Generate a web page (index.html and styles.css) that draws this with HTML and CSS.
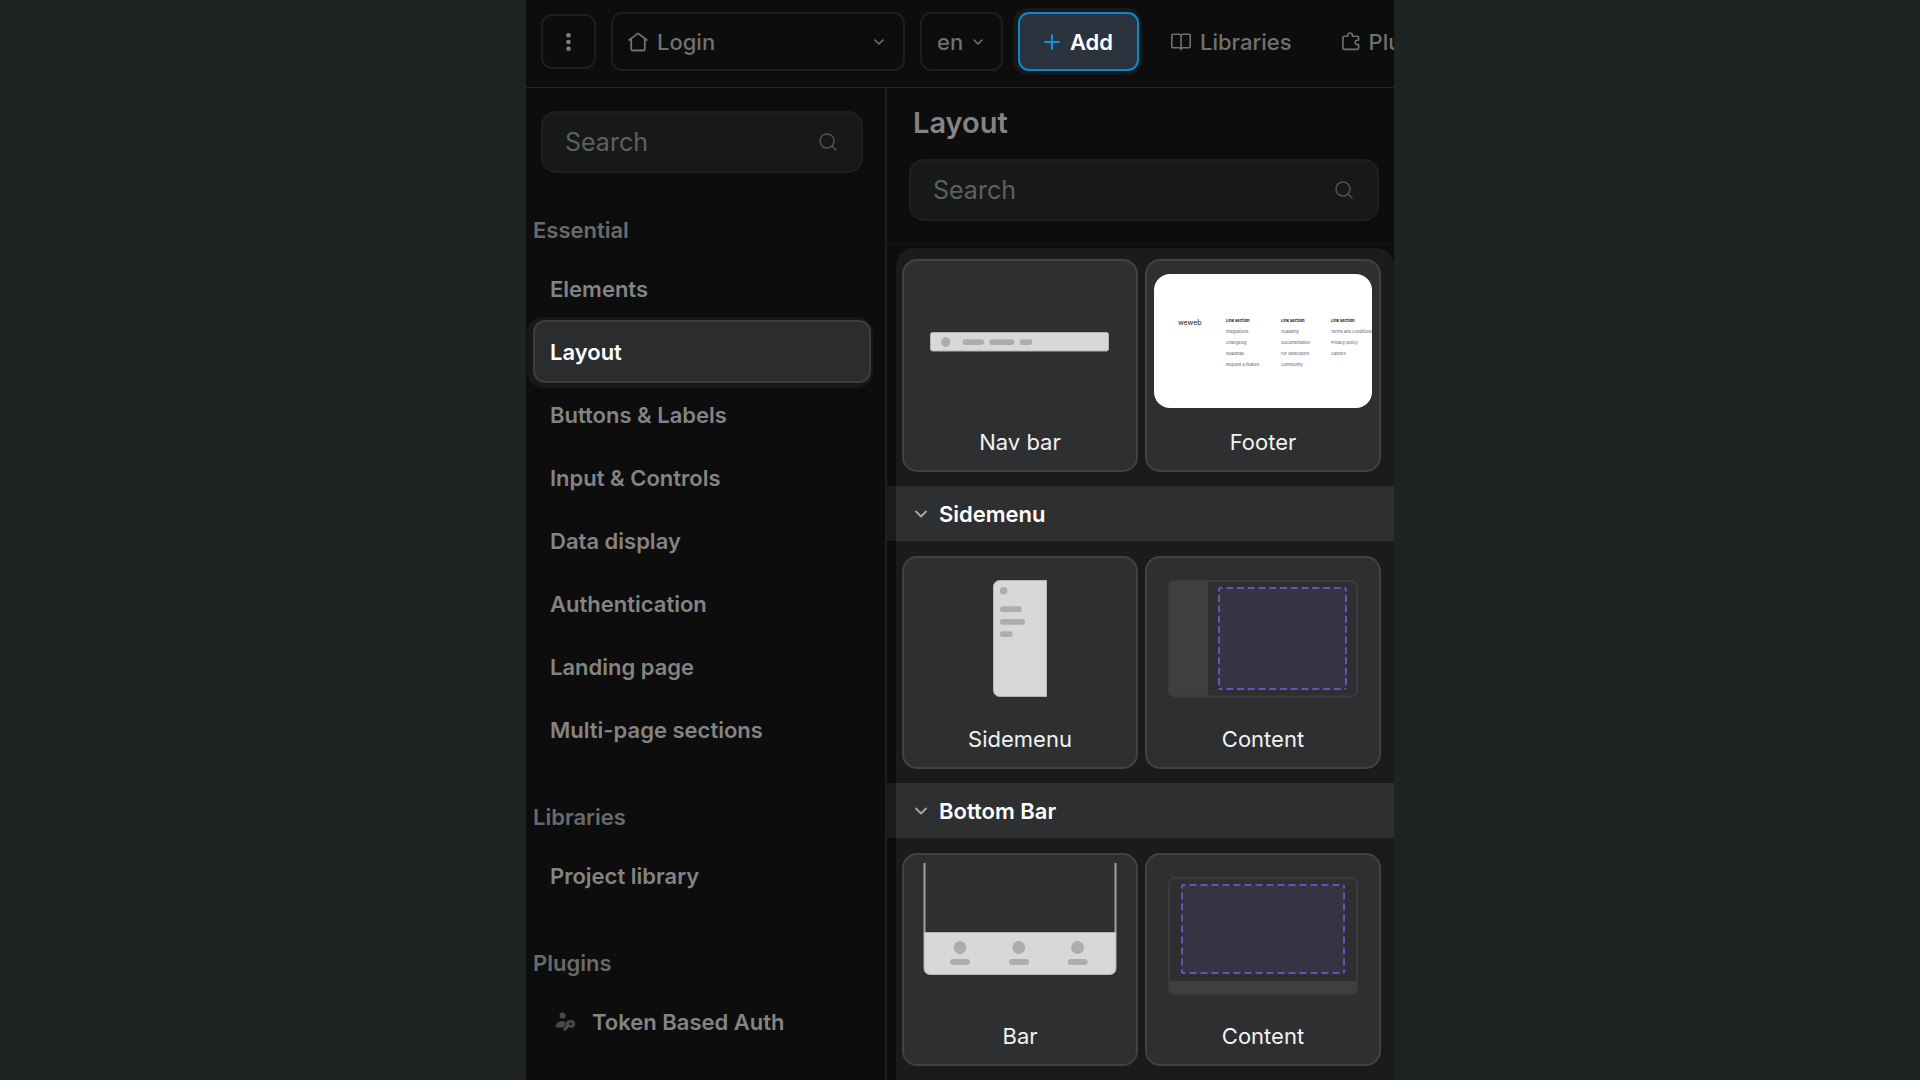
FILE: index.html
```html
<!DOCTYPE html>
<html lang="en">
    <head>
      <meta charset="utf-8">
      <title>Add - Layout</title>
      <link rel="stylesheet" href="styles.css">
    </head>

    <body>
        <div class="editor">
            <header class="topbar">
                <button class="menu_btn" type="button" aria-label="Menu">
                    <svg width="6" height="20" viewBox="0 0 6 20" fill="currentColor"><circle cx="2.500" cy="3.300" r="2.300"/><circle cx="2.500" cy="10" r="2.300"/><circle cx="2.500" cy="16.700" r="2.300"/></svg>
                </button>
                <label class="select_wrap page_select">
                    <svg width="20" height="20" viewBox="0 0 20 20" fill="none" stroke="currentColor" stroke-width="1.800" stroke-linecap="round" stroke-linejoin="round"><path d="M1.200 8 10 1.400l8.800 6.600M3.200 7v9.800a1.700 1.700 0 0 0 1.700 1.700h10.200a1.700 1.700 0 0 0 1.700-1.700V7"/></svg>
                    <select aria-label="Page"><option>Login</option></select>
                    <svg width="10" height="6" viewBox="0 0 10 6" fill="none" stroke="currentColor" stroke-width="1.600" stroke-linecap="round" stroke-linejoin="round"><path d="m1 1 4 4 4-4"/></svg>
                </label>
                <label class="select_wrap lang_select">
                    <select aria-label="Language"><option>en</option></select>
                    <svg width="10" height="6" viewBox="0 0 10 6" fill="none" stroke="currentColor" stroke-width="1.600" stroke-linecap="round" stroke-linejoin="round"><path d="m1 1 4 4 4-4"/></svg>
                </label>
                <button class="add_btn" type="button">
                    <svg width="16" height="16" viewBox="0 0 16 16" fill="none" stroke="currentColor" stroke-width="2" stroke-linecap="round"><path d="M8 1v14M1 8h14"/></svg>
                    <span>Add</span>
                </button>
                <a class="top_link" href="#libraries">
                    <svg width="20" height="18" viewBox="0 0 20 18" fill="none" stroke="currentColor" stroke-width="1.600" stroke-linejoin="round"><path d="M10 3.400C10 2 9 1.200 7.600 1.200H2A1.200 1.200 0 0 0 .8 2.400v11.200a1.200 1.200 0 0 0 1.200 1.200h6c1.200 0 2 .8 2 2M10 3.400c0-1.400 1-2.200 2.400-2.200H18a1.200 1.200 0 0 1 1.200 1.200v11.200a1.200 1.200 0 0 1-1.200 1.200h-6c-1.200 0-2 .8-2 2V3.400"/></svg>
                    Libraries
                </a>
                <a class="top_link" href="#plugins">
                    <svg width="18" height="20" viewBox="0 0 18 20" fill="none" stroke="currentColor" stroke-width="1.600" stroke-linejoin="round"><path d="M2.400 4.200h3.400V3.300a2.300 2.300 0 0 1 4.600 0v.9h4.700a1.500 1.500 0 0 1 1.500 1.500v2.500h-1.300a2.200 2.200 0 0 0 0 4.400h1.300v3.300a1.500 1.500 0 0 1-1.500 1.500H2.400a1.500 1.500 0 0 1-1.500-1.500V5.700a1.500 1.500 0 0 1 1.500-1.500z"/></svg>
                    Plugins
                </a>
            </header>

            <div class="workspace">
                <aside class="sidebar">
                    <label class="search">
                        <input type="text" placeholder="Search" aria-label="Search categories">
                        <svg width="18" height="18" viewBox="0 0 18 18" fill="none" stroke="currentColor" stroke-width="1.500" stroke-linecap="round"><circle cx="8" cy="8" r="7"/><path d="m13 13 4 4"/></svg>
                    </label>

                    <h3 class="group_title">Essential</h3>
                    <nav class="group">
                        <a class="item" href="#elements">Elements</a>
                        <a class="item active" href="#layout">Layout</a>
                        <a class="item" href="#buttons">Buttons &amp; Labels</a>
                        <a class="item" href="#input">Input &amp; Controls</a>
                        <a class="item" href="#data">Data display</a>
                        <a class="item" href="#auth">Authentication</a>
                        <a class="item" href="#landing">Landing page</a>
                        <a class="item" href="#multi">Multi-page sections</a>
                    </nav>

                    <h3 class="group_title">Libraries</h3>
                    <nav class="group">
                        <a class="item" href="#project">Project library</a>
                    </nav>

                    <h3 class="group_title">Plugins</h3>
                    <nav class="group">
                        <a class="item plugin" href="#token">
                            <svg width="20" height="20" viewBox="0 0 20 20" fill="currentColor"><circle cx="7.600" cy="3.600" r="3"/><path d="M.6 15.600c0-4 2.400-6.400 6.600-6.400 1.300 0 2.300.3 3 .8-.4 1.500-.3 2.300 0 3.300l-2.100 2.300z"/><path d="M14.600 8.200a4.300 4.300 0 0 0-4 5.600l-2.100 2.100v2.900h2.900v-1.700H13v-1.500h1.600a4 4 0 1 0 0-7.400zm1.300 2.500a1.200 1.200 0 1 1 0 2.400 1.200 1.200 0 0 1 0-2.400z" fill-rule="evenodd"/></svg>
                            Token Based Auth
                        </a>
                    </nav>
                </aside>

                <main class="panel">
                    <div class="panel_head">
                        <h2>Layout</h2>
                        <label class="search">
                            <input type="text" placeholder="Search" aria-label="Search layout">
                            <svg width="18" height="18" viewBox="0 0 18 18" fill="none" stroke="currentColor" stroke-width="1.500" stroke-linecap="round"><circle cx="8" cy="8" r="7"/><path d="m13 13 4 4"/></svg>
                        </label>
                    </div>

                    <div class="catalog">
                        <div class="cards">
                            <button class="card" type="button">
                                <span class="preview">
                                    <svg width="218" height="134" viewBox="0 0 218 134">
                                        <rect class="block" x="19.500" y="58.500" width="178" height="18.500" rx="2"/>
                                        <g class="mark"><ellipse cx="34.700" cy="68" rx="4.600" ry="5"/><rect x="51.600" y="65.300" width="21.600" height="5.600" rx="2.800"/><rect x="78.300" y="65.300" width="25" height="5.600" rx="2.800"/><rect x="108.700" y="65.300" width="12.700" height="5.600" rx="2.800"/></g>
                                    </svg>
                                </span>
                                <span class="card_name">Nav bar</span>
                            </button>
                            <button class="card" type="button">
                                <span class="preview footer_preview">
                                    <span class="footer_logo">weweb</span>
                                    <span class="footer_col"><b>Link section</b><span>Integrations</span><span>Changelog</span><span>Roadmap</span><span>Request a feature</span></span>
                                    <span class="footer_col"><b>Link section</b><span>Academy</span><span>Documentation</span><span>For developers</span><span>Community</span></span>
                                    <span class="footer_col"><b>Link section</b><span>Terms and conditions</span><span>Privacy policy</span><span>Careers</span></span>
                                </span>
                                <span class="card_name">Footer</span>
                            </button>
                        </div>

                        <button class="section_title" type="button">
                            <svg width="12" height="8" viewBox="0 0 12 8" fill="none" stroke="currentColor" stroke-width="1.800" stroke-linecap="round" stroke-linejoin="round"><path d="m1 1.500 5 5 5-5"/></svg>
                            Sidemenu
                        </button>
                        <div class="cards">
                            <button class="card" type="button">
                                <span class="preview">
                                    <svg width="218" height="134" viewBox="0 0 218 134">
                                        <path class="block" d="M135.500 9.500v116H88.500a6 6 0 0 1-6-6v-104a6 6 0 0 1 6-6z"/>
                                        <g class="mark"><circle cx="92.700" cy="19.700" r="3.800"/><rect x="89" y="35.300" width="21.600" height="5.700" rx="2.800"/><rect x="89" y="48" width="25" height="5.700" rx="2.800"/><rect x="89" y="60.300" width="12.500" height="5.700" rx="2.800"/></g>
                                    </svg>
                                </span>
                                <span class="card_name">Sidemenu</span>
                            </button>
                            <button class="card" type="button">
                                <span class="preview">
                                    <svg width="218" height="134" viewBox="0 0 218 134">
                                        <path class="muted" d="M54 9v117H21a7 7 0 0 1-7-7V16a7 7 0 0 1 7-7z"/>
                                        <rect class="frame" x="15" y="10" width="188" height="115.500" rx="6"/>
                                        <path class="slot" d="M65 17h127v101H65z"/>
                                        <path class="dash" stroke-dasharray="7 3.750" stroke-dashoffset="3.500" d="M65 17h127M65 118h127"/>
                                        <path class="dash" stroke-dasharray="7 3.400" stroke-dashoffset="3.500" d="M65 17v101M192 17v101"/>
                                    </svg>
                                </span>
                                <span class="card_name">Content</span>
                            </button>
                        </div>

                        <button class="section_title" type="button">
                            <svg width="12" height="8" viewBox="0 0 12 8" fill="none" stroke="currentColor" stroke-width="1.800" stroke-linecap="round" stroke-linejoin="round"><path d="m1 1.500 5 5 5-5"/></svg>
                            Bottom Bar
                        </button>
                        <div class="cards">
                            <button class="card" type="button">
                                <span class="preview">
                                    <svg width="218" height="134" viewBox="0 0 218 134">
                                        <path class="rail" d="M13.500-5v70M204.500-5v70"/>
                                        <path class="block" d="M13 64.500h192v36a6 6 0 0 1-6 6H19a6 6 0 0 1-6-6z"/>
                                        <g class="mark"><circle cx="49" cy="79.500" r="6.400"/><circle cx="107.800" cy="79.500" r="6.400"/><circle cx="166.600" cy="79.500" r="6.400"/><rect x="39" y="91" width="20" height="6" rx="3"/><rect x="98" y="91" width="20" height="6" rx="3"/><rect x="156.700" y="91" width="20" height="6" rx="3"/></g>
                                    </svg>
                                </span>
                                <span class="card_name">Bar</span>
                            </button>
                            <button class="card" type="button">
                                <span class="preview">
                                    <svg width="218" height="134" viewBox="0 0 218 134">
                                        <path class="muted" d="M14 113h190v7a7 7 0 0 1-7 7H21a7 7 0 0 1-7-7z"/>
                                        <rect class="frame" x="15" y="10" width="188" height="116" rx="6"/>
                                        <path class="slot" d="M28 17h162v88H28z"/>
                                        <path class="dash" stroke-dasharray="7 4" stroke-dashoffset="3.500" d="M28 17h162M28 105h162"/>
                                        <path class="dash" stroke-dasharray="7 4" stroke-dashoffset="3.500" d="M28 17v88M190 17v88"/>
                                    </svg>
                                </span>
                                <span class="card_name">Content</span>
                            </button>
                        </div>
                    </div>
                </main>
            </div>
        </div>
    </body>
</html>
```
FILE: styles.css
```css
*{
    box-sizing: border-box;
}
body{
    margin: 0;
    background-color: #1e2424;
    font-family: Inter, "Liberation Sans", sans-serif;
    font-size: 22px;
    line-height: 28px;
    color: #848484;
}
button,
input,
select{
    margin: 0;
    padding: 0;
    border: 0;
    background: none;
    font: inherit;
    color: inherit;
    outline: none;
}
button,
select{
    cursor: pointer;
}
select{
    appearance: none;
}
a{
    color: inherit;
    text-decoration: none;
}
h2,
h3{
    margin: 0;
}
svg{
    display: block;
    flex: none;
}
.editor{
    display: flex;
    flex-direction: column;
    max-width: 868px;
    height: 100vh;
    margin: 0 auto;
    overflow: hidden;
    background-color: #0d0d0d;
}

/* top bar */
.topbar{
    display: flex;
    flex: none;
    align-items: center;
    gap: 15px;
    padding: 12px 0 16px 15px;
    border-bottom: 1px solid #242525;
    overflow: hidden;
    font-weight: 500;
    color: #6f7070;
}
.menu_btn,
.select_wrap{
    display: flex;
    flex: none;
    align-items: center;
    border: 2px solid #1d1e1e;
    border-radius: 11px;
}
.menu_btn{
    justify-content: center;
    width: 55px;
    height: 55px;
    color: #808080;
}
.select_wrap{
    height: 59px;
    padding: 0 15px;
}
.page_select{
    width: 294px;
    gap: 9px;
    padding-right: 19px;
}
.page_select select{
    flex: 1;
}
.lang_select{
    width: 83px;
    gap: 9px;
}
.add_btn{
    display: flex;
    flex: none;
    align-items: center;
    justify-content: center;
    gap: 10px;
    width: 121px;
    height: 59px;
    border: 2px solid #0b86d3;
    border-radius: 11px;
    background-color: #2b343e;
    box-shadow: -1px 0 0 4px #171919;
    font-weight: 600;
    color: #1490dd;
}
.add_btn span{
    color: #fff;
}
.top_link{
    display: flex;
    flex: none;
    align-items: center;
    gap: 9px;
    margin-left: 17px;
    margin-right: 18px;
}

/* left column */
.workspace{
    display: flex;
    flex: 1;
    min-height: 0;
}
.sidebar{
    flex: none;
    width: 361px;
    padding: 23px 14px 0 7px;
    border-right: 2px solid #1e1f1f;
    overflow: hidden;
}
.search{
    display: flex;
    align-items: center;
    height: 62px;
    padding: 0 24px 0 22px;
    border: 2px solid #1e2020;
    border-radius: 15px;
    background-color: #171919;
    color: #505252;
}
.search input{
    flex: 1;
    min-width: 0;
    font-size: 25px;
}
.search input::placeholder{
    color: #5e6060;
    opacity: 1;
}
.sidebar .search{
    margin: 0 8px 43px;
}
.group_title{
    margin-bottom: 13px;
    font-size: 22px;
    font-weight: 600;
    color: #6a6a6a;
}
.group{
    margin-bottom: 42px;
}
.item{
    display: flex;
    align-items: center;
    height: 63px;
    padding: 0 15px;
    border: 2px solid transparent;
    border-radius: 12px;
    font-weight: 600;
}
.item.active{
    border-color: #3c3e3e;
    background-color: #2b2c2e;
    box-shadow: -2px 1px 0 4px #171818;
    color: #fff;
}
.item.plugin{
    gap: 17px;
    padding-left: 20px;
}
.item.plugin svg{
    color: #454b4b;
}

/* right column */
.panel{
    display: flex;
    flex: 1;
    flex-direction: column;
    min-width: 0;
}
.panel_head{
    padding: 17px 15px 22px 22px;
    border-bottom: 1px solid #161717;
}
.panel_head h2{
    margin: 0 4px 18px;
    font-size: 29px;
    line-height: 36px;
    font-weight: 600;
}
.catalog{
    flex: 1;
    min-height: 0;
    margin-top: 4px;
    margin-left: 9px;
    border-radius: 18px 18px 0 0;
    background-color: #1a1b1b;
}
.cards{
    display: grid;
    grid-template-columns: repeat(2, minmax(0, 1fr));
    gap: 7px;
    padding: 15px 13px 14px 6px;
}
.cards:first-child{
    padding-top: 11px;
}
.card{
    display: flex;
    flex-direction: column;
    align-items: center;
    height: 213px;
    padding: 13px 7px 0;
    border: 2px solid #414343;
    border-radius: 15px;
    background-color: #2e2f31;
    color: #f2f2f2;
}
.preview{
    display: flex;
    justify-content: center;
    width: 100%;
    height: 134px;
    margin-bottom: 20px;
}
.preview svg{
    overflow: visible;
}
.section_title{
    display: flex;
    align-items: center;
    gap: 12px;
    width: calc(100% + 9px);
    height: 55px;
    margin-left: -9px;
    padding-left: 28px;
    background: linear-gradient(to right, #1b1c1c 9px, #2e2f31 9px);
    font-weight: 600;
    color: #fff;
}
.section_title svg{
    color: #a5a8a8;
}

/* card drawings */
.block{
    fill: #d8d8d8;
    stroke: #b4b4b4;
}
.mark{
    fill: #adadad;
}
.rail{
    fill: none;
    stroke: #a0a0a0;
    stroke-width: 2;
}
.muted{
    fill: #3e3f40;
}
.frame{
    fill: none;
    stroke: #3b3c3e;
    stroke-width: 2;
}
.slot{
    fill: #363443;
}
.dash{
    fill: none;
    stroke: #6453bd;
    stroke-width: 2;
}

/* footer card */
.footer_preview{
    justify-content: flex-start;
    padding: 41px 0 0 24px;
    border-radius: 16px;
    background-color: #fff;
    overflow: hidden;
    font-size: 4px;
    line-height: 11px;
    text-align: left;
    white-space: nowrap;
    color: #555;
}
.footer_logo{
    flex: none;
    width: 48px;
    font-size: 7px;
    line-height: 15px;
    color: #222;
}
.footer_col{
    display: flex;
    flex: none;
    flex-direction: column;
    width: 55px;
}
.footer_col:nth-child(3){
    width: 50px;
}
.footer_col b{
    color: #222;
}
```
